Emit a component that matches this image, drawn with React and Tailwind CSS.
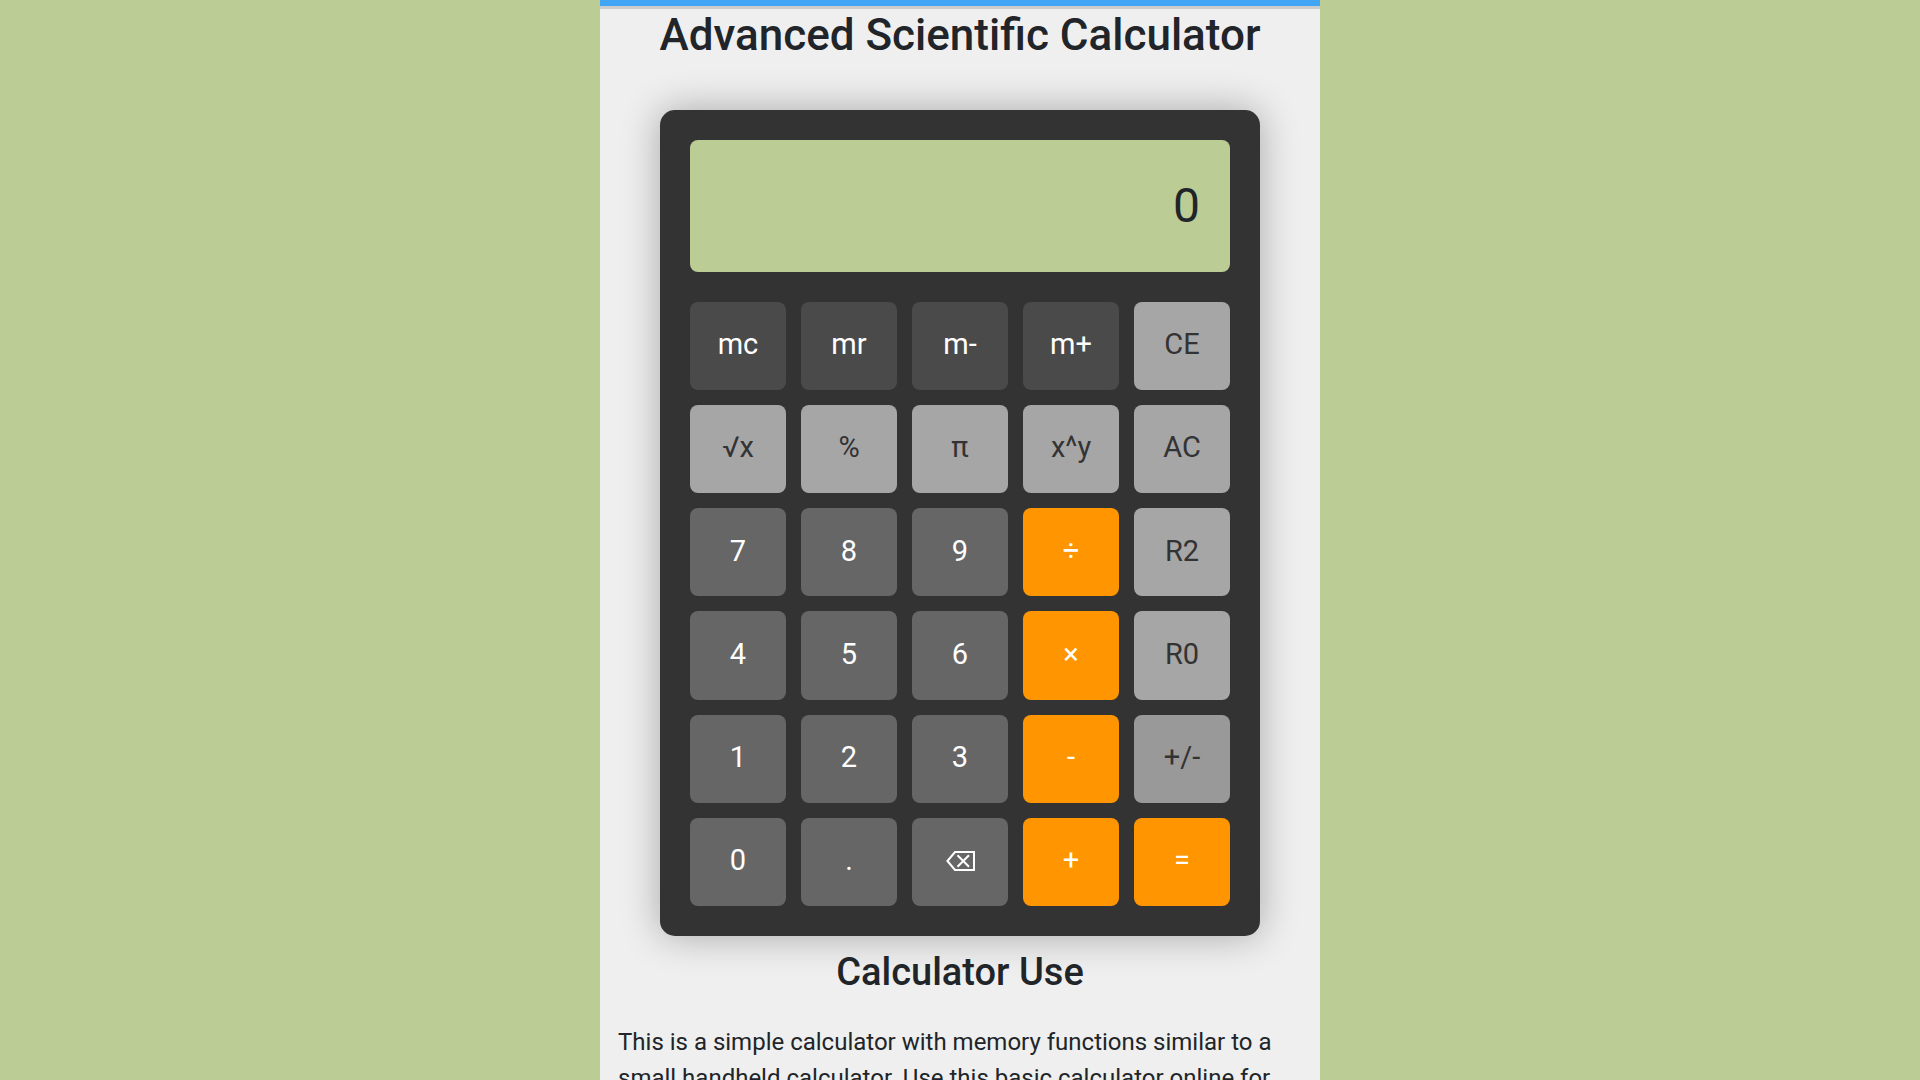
import React, { useState } from 'react';

const memory = 'bg-[#4a4a4a] text-white';
const func = 'bg-[#a6a6a6] text-[#333333]';
const digit = 'bg-[#666666] text-white';
const operator = 'bg-[#ff9500] text-white';
const sign = 'bg-[#999999] text-[#333333]';

const BackspaceIcon = () => (
    <svg viewBox="0 0 29 20" className="mx-auto h-5 w-[29px]" fill="none" stroke="currentColor" strokeWidth="2" aria-hidden="true">
        <path d="M9 1H28V19H9L1.4 10Z" />
        <path d="M11.5 4.2L23 15.8M23 4.2L11.5 15.8" />
    </svg>
);

const keys = [
    { label: 'mc', style: memory },
    { label: 'mr', style: memory },
    { label: 'm-', style: memory },
    { label: 'm+', style: memory },
    { label: 'CE', style: func },
    { label: '√x', style: func },
    { label: '%', style: func },
    { label: 'π', style: func },
    { label: 'x^y', style: func },
    { label: 'AC', style: func },
    { label: '7', style: digit },
    { label: '8', style: digit },
    { label: '9', style: digit },
    { label: '÷', style: operator },
    { label: 'R2', style: func },
    { label: '4', style: digit },
    { label: '5', style: digit },
    { label: '6', style: digit },
    { label: '×', style: operator },
    { label: 'R0', style: func },
    { label: '1', style: digit },
    { label: '2', style: digit },
    { label: '3', style: digit },
    { label: '-', style: operator },
    { label: '+/-', style: sign },
    { label: '0', style: digit },
    { label: '.', style: digit },
    { label: 'Backspace', icon: <BackspaceIcon />, style: digit },
    { label: '+', style: operator },
    { label: '=', style: operator },
];

const App = () => {
    const [display, setDisplay] = useState('0');

    const handleKey = (label) => {
        if (/^\d$/.test(label)) {
            setDisplay(display === '0' ? label : display + label);
        } else if (label === '.') {
            if (!display.includes('.')) setDisplay(display + '.');
        } else if (label === 'Backspace') {
            setDisplay(display.slice(0, -1) || '0');
        } else if (label === 'AC' || label === 'CE') {
            setDisplay('0');
        }
    };

    return (
        <div className="min-h-screen bg-[#bbcd95] font-['Roboto',sans-serif] text-[#212529]">
            <main className="mx-auto min-h-screen w-full max-w-[720px] bg-[#efefef]">
                <div className="h-[9px] border-b-3 border-[#cccccc] bg-[#42a5f5]" />
                <h1 className="text-center text-[44px] leading-[53px] font-medium">Advanced Scientific Calculator</h1>
                <section className="mx-auto mt-12 max-w-[600px] rounded-[15px] bg-[#333333] p-[30px] shadow-[0_0_38px_rgba(0,0,0,0.3)]">
                    <output className="mb-[30px] flex h-[132px] items-center justify-end overflow-hidden rounded-lg bg-[#bbcd95] px-[30px] text-5xl">
                        {display}
                    </output>
                    <div className="grid min-h-[604px] grid-cols-5 gap-[15px]">
                        {keys.map((key) => (
                            <button
                                key={key.label}
                                type="button"
                                aria-label={key.label}
                                onClick={() => handleKey(key.label)}
                                className={`min-h-[88px] rounded-lg pb-0.5 text-[29px] ${key.style}`}
                            >
                                {key.icon || key.label}
                            </button>
                        ))}
                    </div>
                </section>
                <h2 className="mt-3 text-center text-[38px] leading-12 font-medium">Calculator Use</h2>
                <p className="px-[18px] pt-7 text-2xl leading-9">
                    This is a simple calculator with memory functions similar to a small handheld calculator. Use this basic calculator online for
                </p>
            </main>
        </div>
    );
};

export default App;
